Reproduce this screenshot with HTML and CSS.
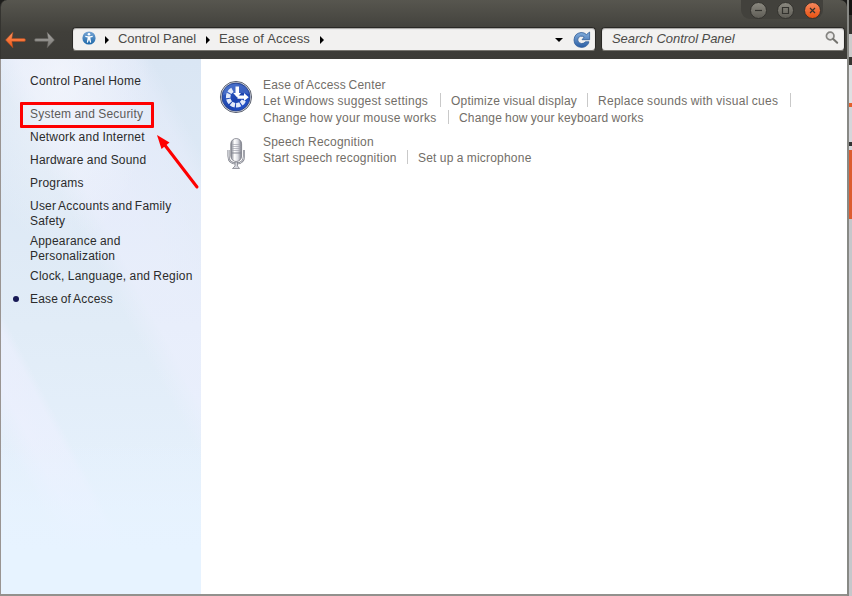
FILE: index.html
```html
<!DOCTYPE html>
<html lang="en">
<head>
    <meta charset="UTF-8" />
    <meta name="viewport" content="width=device-width, initial-scale=1.0" />
    <title>Ease of Access</title>
    <link rel="stylesheet" href="styles.css">
</head>
<body>
    <div class="window">
        <header class="header">
            <div class="titlebar">
                <div class="window-buttons">
                    <svg width="82" height="19" viewBox="0 0 82 19">
                        <defs>
                            <linearGradient id="grey" x1="0" y1="0" x2="0" y2="1"><stop offset="0" stop-color="#8c8a81"/><stop offset="1" stop-color="#5d5b54"/></linearGradient>
                            <linearGradient id="orange" x1="0" y1="0" x2="0" y2="1"><stop offset="0" stop-color="#f6895f"/><stop offset="1" stop-color="#e9500f"/></linearGradient>
                        </defs>
                        <g stroke="#33322e">
                            <circle cx="17.5" cy="10.5" r="8" fill="url(#grey)"/>
                            <circle cx="44.5" cy="10.5" r="8" fill="url(#grey)"/>
                            <circle cx="71.5" cy="10.5" r="8" fill="url(#orange)"/>
                        </g>
                        <g fill="none" stroke="#33322e" stroke-width="1.2">
                            <path d="M14 10.5h7"/>
                            <path d="M41.5 7.5h6v6h-6z"/>
                            <path d="M69 8l5 5m0-5l-5 5"/>
                        </g>
                    </svg>
                </div>
            </div>
            <div class="toolbar">
                <svg class="history" width="54" height="20" viewBox="0 0 54 20">
                    <defs>
                        <linearGradient id="back" x1="0" y1="0" x2="0" y2="1"><stop offset="0" stop-color="#ff9664"/><stop offset="1" stop-color="#ef5511"/></linearGradient>
                        <linearGradient id="next" x1="0" y1="0" x2="0" y2="1"><stop offset="0" stop-color="#aaa9a6"/><stop offset="1" stop-color="#777571"/></linearGradient>
                    </defs>
                    <path d="M.5 10L8 2L6.9 8.5H19Q20.5 8.5 20.5 10T19 11.5H6.9L8 18z" fill="url(#back)" stroke="#a5471c" stroke-width=".5"/>
                    <path d="M49.5 10L42 2L43.1 8.5H31Q29.5 8.5 29.5 10T31 11.5H43.1L42 18z" fill="url(#next)" stroke="#5b5955" stroke-width=".5"/>
                </svg>
                <div class="address">
                    <svg class="place" width="14" height="14" viewBox="0 0 14 14">
                        <defs><linearGradient id="blue" x1="0" y1="0" x2="0" y2="1"><stop offset="0" stop-color="#79a6d5"/><stop offset="1" stop-color="#1b67a9"/></linearGradient></defs>
                        <circle cx="7" cy="7" r="6.6" fill="url(#blue)"/>
                        <circle cx="7" cy="3.2" r="1.3" fill="#fff"/>
                        <path d="M3.3 4.8L6 5.3H8L10.7 4.8V5.9L8.3 6.5L9.2 11.5L8.2 11.8L7 8.4L5.8 11.8L4.8 11.5L5.7 6.5L3.3 5.9z" fill="#fff"/>
                    </svg>
                    <i class="chevron"></i>
                    <span class="crumb crumb-root">Control Panel</span>
                    <i class="chevron"></i>
                    <span class="crumb crumb-page">Ease of Access</span>
                    <i class="chevron"></i>
                    <i class="dropdown"></i>
                    <svg class="refresh" width="18" height="18" viewBox="0 0 18 18">
                        <defs><linearGradient id="reload" x1="0" y1="0" x2="0" y2="1"><stop offset="0" stop-color="#86b0dd"/><stop offset="1" stop-color="#2a5ea5"/></linearGradient></defs>
                        <path d="M13.5 3.6L16.6 1V8.7H9L11.2 6.1Q9.6 4.9 7.6 5.2Q4.7 6 4.7 9Q5 12.4 8.6 12.6Q11.2 12.5 12.5 10.8H16Q14.5 16.2 8.6 16.4Q1.1 15.9 1 9Q1.4 2.3 8.1 1.5Q11.3 1.4 13.5 3.6z" fill="url(#reload)" stroke="#315d98" stroke-width=".8"/>
                    </svg>
                </div>
                <div class="search">
                    <span class="search-text">Search Control Panel</span>
                    <svg width="14" height="14" viewBox="0 0 14 14">
                        <circle cx="5.2" cy="5" r="3.8" fill="#e8e7e6" stroke="#858481" stroke-width="1.7"/>
                        <path d="M8.2 8l4 3.8" stroke="#74736f" stroke-width="2" stroke-linecap="round"/>
                    </svg>
                </div>
            </div>
        </header>

        <div class="content">
            <nav class="sidebar">
                <a class="home">Control Panel Home</a>
                <a class="selected">System and Security</a>
                <a>Network and Internet</a>
                <a>Hardware and Sound</a>
                <a>Programs</a>
                <a class="double tight">User Accounts and Family<br>Safety</a>
                <a class="double">Appearance and<br>Personalization</a>
                <a>Clock, Language, and Region</a>
                <a class="current tight">Ease of Access</a>
            </nav>

            <main class="main">
                <section class="category">
                    <svg class="icon" width="34" height="34" viewBox="0 0 34 34">
                        <defs><linearGradient id="ease" x1="0" y1="0" x2="1" y2="1"><stop offset="0" stop-color="#3868cb"/><stop offset=".55" stop-color="#1c43ae"/><stop offset="1" stop-color="#2759d6"/></linearGradient></defs>
                        <circle cx="17" cy="17" r="15.6" fill="#d7dae0" stroke="#626775"/>
                        <circle cx="17" cy="17" r="14" fill="url(#ease)" stroke="#263d82" stroke-width=".8"/>
                        <path d="M3.8 15Q5 4.5 17 3.8Q28 4.5 30 14Q17 11 3.8 15z" fill="#7799dd" opacity=".35"/>
                        <path d="M24.8 20.5A8.2 8.2 0 1 1 14 9.6" fill="none" stroke="#e4ebfa" stroke-width="4.6" stroke-dasharray="4.2 1.1"/>
                        <path d="M16.5 6.5H20V13H22L18.2 17.5L14.2 13H16.5z" fill="#fff"/>
                        <path d="M18.5 15.5H25V13L29.7 17.2L25 21V18.8H18.5z" fill="#fff"/>
                    </svg>
                    <div class="details">
                        <h2 class="tight">Ease of Access Center</h2>
                        <ul>
                            <li class="suggest">Let Windows suggest settings</li>
                            <li class="optimize">Optimize visual display</li>
                            <li class="replace">Replace sounds with visual cues</li>
                            <li class="blank"></li>
                        </ul>
                        <ul>
                            <li class="mouse">Change how your mouse works</li>
                            <li class="keyboard">Change how your keyboard works</li>
                        </ul>
                    </div>
                </section>
                <section class="category">
                    <svg class="icon" width="34" height="34" viewBox="0 0 34 34">
                        <defs>
                            <linearGradient id="mic" x1="0" y1="0" x2="1" y2="0"><stop offset="0" stop-color="#777a85"/><stop offset=".35" stop-color="#fff"/><stop offset=".65" stop-color="#dcdde3"/><stop offset="1" stop-color="#777984"/></linearGradient>
                        </defs>
                        <path d="M9.5 13V19Q9.5 26.5 17.2 26.5T25 19V13" fill="none" stroke="#777982" stroke-width="2"/>
                        <path d="M9.5 13V19Q9.5 26.5 17.2 26.5T25 19V13" fill="none" stroke="#e0e1e7" stroke-width=".8"/>
                        <path d="M16 25h2.5v4l2 2.5h-7l2.5-2.5z" fill="#d6d7dd" stroke="#777982" stroke-width=".7"/>
                        <rect x="11.8" y="1.5" width="10.8" height="23" rx="5.4" fill="url(#mic)" stroke="#7c7e88" stroke-width=".8"/>
                        <path d="M13 7.5h8.5M13 9.5h8.5M13 11.5h8.5M13 13.5h8.5" stroke="#a2a4ae" stroke-width=".7"/>
                        <path d="M12 16h10.5" stroke="#858792" stroke-width="1"/>
                    </svg>
                    <div class="details">
                        <h2>Speech Recognition</h2>
                        <ul>
                            <li class="speech">Start speech recognition</li>
                            <li>Set up a microphone</li>
                        </ul>
                    </div>
                </section>
            </main>
        </div>
    </div>
    <div class="behind"></div>

    <div class="highlight"></div>
    <svg class="pointer" width="44" height="56" viewBox="0 0 44 56">
        <path d="M41 53L8 10" stroke="#fe0000" stroke-width="3" stroke-linecap="round"/>
        <path d="M1 1L13.5 8.5L5.5 15z" fill="#fe0000"/>
    </svg>
</body>
</html>
```

FILE: styles.css
```css
* {
    margin: 0;
    padding: 0;
    box-sizing: border-box;
}

body {
    display: flex;
    position: relative;
    width: 852px;
    height: 596px;
    overflow: hidden;
    background: #1d1d1b;
    font-family: "Liberation Sans", Arial, sans-serif;
    font-size: 12px;
    line-height: 15px;
    letter-spacing: 0.21px;
    word-spacing: -0.4px;
    white-space: nowrap;
}

.window {
    display: flex;
    flex-direction: column;
    width: 847px;
    height: 596px;
    border-bottom: 2px solid #92918d;
}

.header {
    height: 59px;
    background: linear-gradient(#57564f, #403f3a 32px, #3c3b37);
    border-radius: 7px 7px 0 0;
    border-left: 1px solid #353430;
}

.titlebar {
    display: flex;
    justify-content: flex-end;
    height: 27px;
    padding-right: 24px;
}

.window-buttons {
    height: 19px;
    border-radius: 0 0 9px 9px;
    background: #42413c;
}

.toolbar {
    display: flex;
    align-items: center;
    height: 24px;
    padding-left: 4px;
}

.history {
    flex: none;
    margin-top: 1px;
}

.address,
.search {
    display: flex;
    align-items: center;
    height: 24px;
    border: 1px solid #292825;
    border-bottom-color: #77756f;
    border-radius: 4px;
    background: #f2f1f0;
    box-shadow: inset 0 1px 1px #a3a29f;
    color: #4c4b48;
    font-size: 13px;
    letter-spacing: -0.05px;
    word-spacing: 0;
}

.address {
    width: 524px;
    margin-left: 13px;
    padding-left: 9px;
}

.place {
    margin: -2px 9px 0 0;
}

.chevron {
    margin-top: 1px;
    border: 4px solid transparent;
    border-left-color: #000;
    border-right: 0;
}

.crumb {
    margin: -1px 9px 0 9px;
}

.crumb-root {
    width: 79px;
}

.crumb-page {
    width: 92px;
    letter-spacing: 0.15px;
}

.dropdown {
    margin: 2px 10px 0 auto;
    border: 4px solid transparent;
    border-top-color: #000;
    border-bottom: 0;
}

.refresh {
    margin: 1px 4px 0 0;
}

.search {
    justify-content: space-between;
    width: 244px;
    margin-left: 5px;
    padding: 0 5px 0 10px;
}

.search-text {
    margin-top: -1px;
    font-style: italic;
}

.search svg {
    margin-top: -2px;
}

.content {
    display: flex;
    flex: 1;
    border-left: 1px solid #999492;
    background: #fff;
}

.sidebar {
    width: 200px;
    padding: 15px 0 0 29px;
    background:
        linear-gradient(transparent 70%, #e7f3ff 92%),
        radial-gradient(ellipse 90px 170px at 60px 20px, rgba(245, 247, 252, 0.7), transparent),
        linear-gradient(62deg, transparent 17%, rgba(239, 240, 255, 0.6) 23%, rgba(239, 240, 255, 0.5) 29%, transparent 31%),
        linear-gradient(62deg, transparent 56%, rgba(239, 240, 255, 0.5) 62%, rgba(239, 240, 255, 0.5) 70%, rgba(239, 240, 255, 0.3) 86%, transparent 90%),
        linear-gradient(#dae6f4, #e1ecf7 50%, #e8f3ff);
    color: #2b2b2b;
}

.sidebar a {
    display: block;
    margin-bottom: 8px;
}

.sidebar .home {
    margin-bottom: 18px;
}

.sidebar .selected {
    color: #5c5b59;
}

.sidebar .double {
    margin-bottom: 5px;
}

.tight {
    word-spacing: -1px;
}

.current::before {
    content: "";
    float: left;
    width: 6px;
    height: 6px;
    margin: 4px 0 0 -17px;
    border-radius: 50%;
    background: #171955;
}

.main {
    flex: 1;
    padding: 18px 0 0 18px;
    color: #726e68;
}

.category {
    display: flex;
    height: 57px;
}

.icon {
    flex: none;
    margin: 3px 10px 0 0;
}

.details h2 {
    height: 16px;
    font-size: 12px;
    font-weight: normal;
    line-height: 17px;
}

.details ul {
    display: flex;
    height: 17px;
    line-height: 17px;
    list-style: none;
}

.details li + li {
    height: 14px;
    padding-left: 10px;
    border-left: 1px solid #c9c9c9;
}

.suggest {
    width: 177px;
    letter-spacing: 0.27px;
}

.details .optimize {
    width: 147px;
}

.details .replace {
    width: 203px;
    letter-spacing: 0.27px;
}

.mouse {
    width: 185px;
    letter-spacing: 0.26px;
}

.keyboard {
    letter-spacing: 0.16px;
}

.speech {
    width: 144px;
}

/* edge of the desktop to the right of the window */
.behind {
    width: 5px;
    border-left: 2px solid #888985;
    background: linear-gradient(#151513 15px, #353430 15px 34px, #ccc 34px 57px, #353430 57px 65px, #dfe0e2 65px 103px, #e2602e 103px 107px, #d5d6da 107px 142px, #333 142px 146px, #d5d6da 146px 150px, #dc5d30 150px 219px, #c6c7cb 219px);
}

.highlight {
    position: absolute;
    left: 20px;
    top: 102px;
    width: 134px;
    height: 26px;
    border: 3px solid #fe0000;
    border-radius: 1px;
}

.pointer {
    position: absolute;
    left: 156px;
    top: 134px;
}
```
